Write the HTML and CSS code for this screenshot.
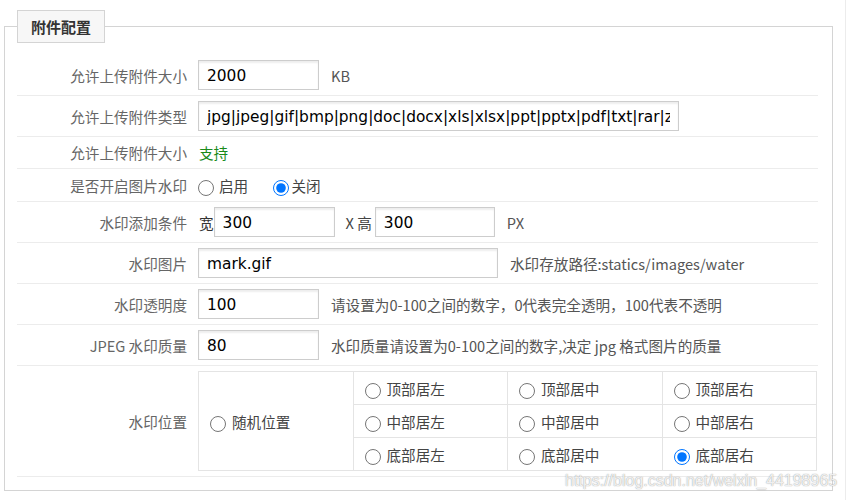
FILE: index.html
```html
<!DOCTYPE html>
<html lang="zh-CN">
<head>
<meta charset="utf-8">
<title>附件配置</title>
<link rel="stylesheet" href="styles.css">
</head>
<body>
<div class="page">
  <fieldset class="box">
    <legend class="box-title">附件配置</legend>
    <table class="form">
      <tr>
        <th>允许上传附件大小</th>
        <td><input class="txt w-s" type="text" value="2000"><span class="tip">KB</span></td>
      </tr>
      <tr>
        <th>允许上传附件类型</th>
        <td><input class="txt w-l" type="text" value="jpg|jpeg|gif|bmp|png|doc|docx|xls|xlsx|ppt|pptx|pdf|txt|rar|zip|swf"></td>
      </tr>
      <tr class="row-text">
        <th>允许上传附件大小</th>
        <td><span class="ok">支持</span></td>
      </tr>
      <tr class="row-radio">
        <th>是否开启图片水印</th>
        <td>
          <label class="opt opt-first"><input class="rd" type="radio" name="wm">启用</label>
          <label class="opt opt-second"><input class="rd" type="radio" name="wm" checked>关闭</label>
        </td>
      </tr>
      <tr>
        <th>水印添加条件</th>
        <td><span class="pre">宽</span><input class="txt w-s" type="text" value="300"><span class="mid">X 高</span><input class="txt w-s2" type="text" value="300"><span class="tip">PX</span></td>
      </tr>
      <tr>
        <th>水印图片</th>
        <td><input class="txt w-m" type="text" value="mark.gif"><span class="tip">水印存放路径:statics/images/water</span></td>
      </tr>
      <tr>
        <th>水印透明度</th>
        <td><input class="txt w-s" type="text" value="100"><span class="tip">请设置为0-100之间的数字，0代表完全透明，100代表不透明</span></td>
      </tr>
      <tr>
        <th>JPEG 水印质量</th>
        <td><input class="txt w-s" type="text" value="80"><span class="tip">水印质量请设置为0-100之间的数字,决定 jpg 格式图片的质量</span></td>
      </tr>
      <tr class="row-pos">
        <th>水印位置</th>
        <td>
          <table class="pos">
            <tr>
              <td rowspan="3"><label class="cell-opt"><input class="rd" type="radio" name="pos">随机位置</label></td>
              <td><label class="cell-opt"><input class="rd" type="radio" name="pos">顶部居左</label></td>
              <td><label class="cell-opt"><input class="rd" type="radio" name="pos">顶部居中</label></td>
              <td><label class="cell-opt"><input class="rd" type="radio" name="pos">顶部居右</label></td>
            </tr>
            <tr>
              <td><label class="cell-opt"><input class="rd" type="radio" name="pos">中部居左</label></td>
              <td><label class="cell-opt"><input class="rd" type="radio" name="pos">中部居中</label></td>
              <td><label class="cell-opt"><input class="rd" type="radio" name="pos">中部居右</label></td>
            </tr>
            <tr>
              <td><label class="cell-opt"><input class="rd" type="radio" name="pos">底部居左</label></td>
              <td><label class="cell-opt"><input class="rd" type="radio" name="pos">底部居中</label></td>
              <td><label class="cell-opt"><input class="rd" type="radio" name="pos" checked>底部居右</label></td>
            </tr>
          </table>
        </td>
      </tr>
    </table>
  </fieldset>
  <div class="wm">https://blog.csdn.net/weixin_44198965</div>
</div>
</body>
</html>
```

FILE: styles.css
```css
html, body {
  margin: 0;
  padding: 0;
  background: #fff;
}

body {
  font-family: "Noto Sans CJK SC", "Noto Sans", sans-serif;
  font-size: 14.6px;
  color: #444;
}

.page {
  position: relative;
  width: 846px;
  height: 500px;
  box-sizing: border-box;
  padding: 10px 12px 0 4px;
  border-right: 1px solid #ececec;
}

.box {
  margin: 0;
  border: 1px solid #d4d4d4;
  padding: 12px 14px 13px 12px;
  min-width: 0;
}

.box-title {
  margin: 0;
  padding: 5px 13px 5px 13px;
  line-height: 21px;
  border: 1px solid #d4d4d4;
  background: #f7f7f7;
  font-size: 15px;
  font-weight: bold;
  color: #333;
}

.form {
  width: 100%;
  border-collapse: collapse;
}

.form > tbody > tr > th,
.form > tbody > tr > td {
  border-bottom: 1px solid #ececec;
  padding: 5px 0 5px 6px;
  line-height: 21px;
  vertical-align: middle;
}

.form > tbody > tr > th {
  width: 170px;
  padding: 5px 5px 5px 0;
  text-align: right;
  font-weight: normal;
  color: #666;
  white-space: nowrap;
}

.form > tbody > tr.row-radio > th,
.form > tbody > tr.row-radio > td {
  padding-top: 6px;
  padding-bottom: 5px;
}

.txt {
  box-sizing: border-box;
  height: 30px;
  margin: 0;
  padding: 1px 8px 0;
  border: 1px solid #cdcdcd;
  box-shadow: inset 0 2px 2px rgba(0, 0, 0, 0.07);
  font-family: "DejaVu Sans", Verdana, sans-serif;
  font-size: 15.4px;
  color: #000;
  vertical-align: middle;
  outline: none;
}

.w-s { width: 121px; }
.w-s2 { width: 120px; }
.w-m { width: 300px; }
.w-l { width: 481px; }

.tip {
  margin-left: 12px;
  color: #555;
  vertical-align: middle;
}

.pre {
  margin-left: 1px;
  color: #333;
  vertical-align: middle;
}

.mid {
  margin: 0 3px 0 11px;
  color: #444;
  vertical-align: middle;
}

.ok {
  margin-left: 1px;
  color: #1a8a1a;
}

.rd {
  width: 16px;
  height: 16px;
  margin: 0;
  vertical-align: -4px;
  accent-color: #0075ff;
}

.opt {
  color: #444;
}

.opt-first .rd {
  margin-right: 5px;
}

.opt-second {
  margin-left: 22px;
}

.opt-second .rd {
  margin-right: 2px;
}

.pos {
  width: 619px;
  table-layout: fixed;
  border-collapse: collapse;
}

.pos td {
  height: 32px;
  padding: 0 0 0 11px;
  border: 1px solid #e4e4e4;
  line-height: 21px;
  vertical-align: middle;
  color: #444;
  white-space: nowrap;
}

.cell-opt .rd {
  margin-right: 6px;
}

.wm {
  position: absolute;
  left: 565px;
  top: 472px;
  font-family: "Liberation Sans", Arial, sans-serif;
  font-size: 16px;
  line-height: 18px;
  color: rgba(255, 255, 255, 0.85);
  text-shadow: 0 0 1px rgba(120, 120, 120, 0.5), 0 0 1px rgba(120, 120, 120, 0.5);
  white-space: nowrap;
}
```
